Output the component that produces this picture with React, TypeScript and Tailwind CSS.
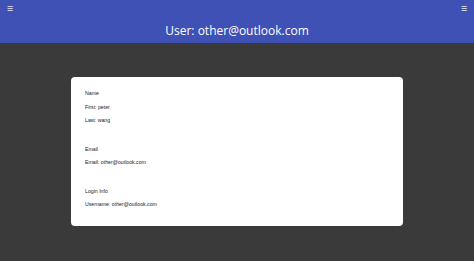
export default function App() {
  const sections = [
    { title: 'Name', lines: ['First: peter', 'Last: wang'] },
    { title: 'Email', lines: ['Email: other@outlook.com'] },
    { title: 'Login Info', lines: ['Username: other@outlook.com'] },
  ];

  return (
    <div className="h-[261px] w-[474px] overflow-hidden bg-[#3a3a3a]">
      {/* Header */}
      <div className="h-[43px] bg-[#3f51b5] text-white">
        <div className="flex h-[16px] items-center justify-between px-[7px] text-[7px] leading-none text-[#e8eaf6]">
          <span>☰</span>
          <span>☰</span>
        </div>
        <div
          className="text-center text-[12px] leading-[29px]"
          style={{ fontFamily: '"Open Sans", sans-serif' }}
        >
          User: other@outlook.com
        </div>
      </div>

      {/* Card */}
      <div className="ml-[71px] mt-[34px] h-[149px] w-[332px] rounded-[4px] bg-white pl-[14px] pt-[10px]">
        <div
          className="flex flex-col gap-[15px] text-[5.2px] text-[#222]"
          style={{ fontFamily: '"Liberation Sans", Arial, sans-serif' }}
        >
          {sections.map((s) => (
            <div key={s.title} className="flex flex-col">
              <div className="h-[13.5px] leading-[13.5px]">{s.title}</div>
              {s.lines.map((l) => (
                <div key={l} className="h-[13.5px] leading-[13.5px]">
                  {l}
                </div>
              ))}
            </div>
          ))}
        </div>
      </div>
    </div>
  );
}
